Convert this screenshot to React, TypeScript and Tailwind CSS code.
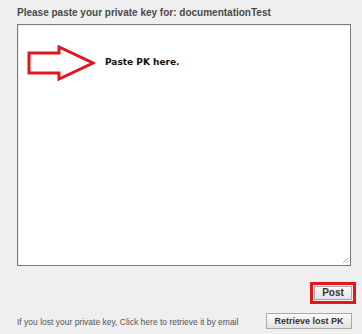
import React from "react";

const Arrow = () => (
  <svg width="68" height="36" viewBox="0 0 68 36" className="shrink-0">
    <path
      d="M2 8 H32 V2 L66 18 L32 34 V28 H2 Z"
      fill="none"
      stroke="#e3141c"
      strokeWidth="3"
      strokeLinejoin="miter"
    />
  </svg>
);

export default function App() {
  return (
    <div
      className="w-[362px] h-[334px] overflow-hidden bg-[#efefef] pl-[17px] pr-[11px] pt-[6px] text-[#444]"
      style={{ fontFamily: '"Liberation Sans", Arial, sans-serif' }}
    >
      <div className="text-[10px] font-bold leading-[14px] text-[#4a4a4a]">
        Please paste your private key for: documentationTest
      </div>
      <div className="mt-[4px] h-[242px] w-[334px] border border-[#7a7a7a] bg-white shadow-[inset_1px_1px_1px_rgba(0,0,0,0.08)] relative">
        <div className="flex items-center pl-[9px] pt-[20px] gap-[10px]">
          <Arrow />
          <span
            className="text-[9px] font-bold text-[#111] mt-[-1px]"
            style={{ fontFamily: '"DejaVu Sans", Verdana, sans-serif' }}
          >
            Paste PK here.
          </span>
        </div>
        <svg width="8" height="8" className="absolute right-[1px] bottom-[1px]">
          <path d="M7 2 L2 7 M7 5 L5 7" stroke="#aaa" strokeWidth="1" />
        </svg>
      </div>
      <div className="flex justify-end mt-[16px] mr-[-5px]">
        <div className="border-[3px] border-[#e8141c] p-[1px]">
          <button className="block h-[14px] w-[38px] border border-[#a8a8a8] bg-gradient-to-b from-[#fbfbfb] to-[#e2e2e2] text-[10px] font-bold text-[#333] leading-none">
            Post
          </button>
        </div>
      </div>
      <div className="flex items-center justify-between mt-[9px]">
        <span className="text-[8.5px] leading-[12px] text-[#555] mt-[2px]">
          If you lost your private key, Click here to retrieve it by email
        </span>
        <button className="block h-[16px] w-[86px] mr-[-1px] border border-[#a8a8a8] bg-gradient-to-b from-[#fbfbfb] to-[#e2e2e2] text-[9px] font-bold text-[#333] leading-none">
          Retrieve lost PK
        </button>
      </div>
    </div>
  );
}
